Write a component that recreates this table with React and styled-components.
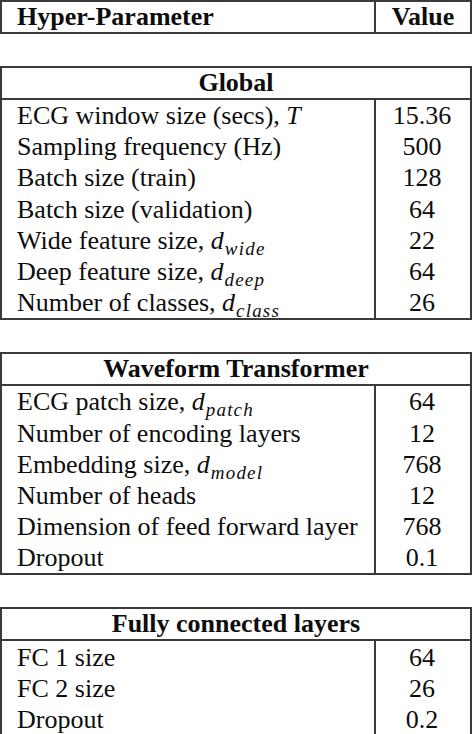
import React from "react";
import styled, { createGlobalStyle } from "styled-components";

const Global = createGlobalStyle`
  html, body { margin: 0; padding: 0; background: #fff; }
  body { font-family: "Liberation Serif", "Times New Roman", serif; color: #0d0d0d; }
`;

const Page = styled.div`
  width: 474px;
  display: flex;
  flex-direction: column;
  gap: 32px;
`;

const Block = styled.div`
  width: 472px;
  box-sizing: border-box;
  border: 2px solid #3a3a3a;
  display: grid;
  grid-template-columns: 374px 1fr;
`;

const HeadCell = styled.div`
  height: 30px;
  display: flex;
  align-items: center;
  justify-content: ${(p) => (p.$center ? "center" : "flex-start")};
  padding-left: ${(p) => (p.$center ? "0" : "15px")};
  font-weight: bold;
  font-size: 26px;
  line-height: 30px;
  border-right: ${(p) => (p.$divider ? "2px solid #3a3a3a" : "none")};
  ${(p) => (p.$span ? "grid-column: 1 / span 2; border-bottom: 2px solid #3a3a3a;" : "")}
`;

const Label = styled.div`
  height: 31.2px;
  display: flex;
  align-items: center;
  padding-left: 15px;
  font-size: 26px;
  line-height: 31px;
  border-right: 2px solid #3a3a3a;
  white-space: nowrap;
`;

const Value = styled.div`
  height: 31.2px;
  display: flex;
  align-items: center;
  justify-content: center;
  font-size: 26px;
  line-height: 31px;
  padding-right: 2px;
`;

const Text = styled.span`
  white-space: pre;
`;

const Mi = styled.i`
  font-style: italic;
  margin-right: 1px;
`;

const Sub = styled.sub`
  font-style: italic;
  font-size: 19px;
  vertical-align: -6px;
  line-height: 0;
  letter-spacing: 1.2px;
`;

const Var = ({ v, sub }) => (
  <>
    <Mi>{v}</Mi>
    {sub && <Sub>{sub}</Sub>}
  </>
);

const sections = [
  {
    title: "Global",
    rows: [
      [<>ECG window size (secs), <Var v="T" /></>, "15.36"],
      ["Sampling frequency (Hz)", "500"],
      ["Batch size (train)", "128"],
      ["Batch size (validation)", "64"],
      [<>Wide feature size, <Var v="d" sub="wide" /></>, "22"],
      [<>Deep feature size, <Var v="d" sub="deep" /></>, "64"],
      [<>Number of classes, <Var v="d" sub="class" /></>, "26"],
    ],
  },
  {
    title: "Waveform Transformer",
    rows: [
      [<>ECG patch size, <Var v="d" sub="patch" /></>, "64"],
      ["Number of encoding layers", "12"],
      [<>Embedding size, <Var v="d" sub="model" /></>, "768"],
      ["Number of heads", "12"],
      ["Dimension of feed forward layer", "768"],
      ["Dropout", "0.1"],
    ],
  },
  {
    title: "Fully connected layers",
    rows: [
      ["FC 1 size", "64"],
      ["FC 2 size", "26"],
      ["Dropout", "0.2"],
    ],
  },
];

export default function App() {
  return (
    <>
      <Global />
      <Page>
        <Block>
          <HeadCell $divider>Hyper-Parameter</HeadCell>
          <HeadCell $center>Value</HeadCell>
        </Block>
        {sections.map((s) => (
          <Block key={s.title}>
            <HeadCell $span $center>{s.title}</HeadCell>
            {s.rows.map(([l, v], i) => (
              <React.Fragment key={i}>
                <Label><Text>{l}</Text></Label>
                <Value>{v}</Value>
              </React.Fragment>
            ))}
          </Block>
        ))}
      </Page>
    </>
  );
}
